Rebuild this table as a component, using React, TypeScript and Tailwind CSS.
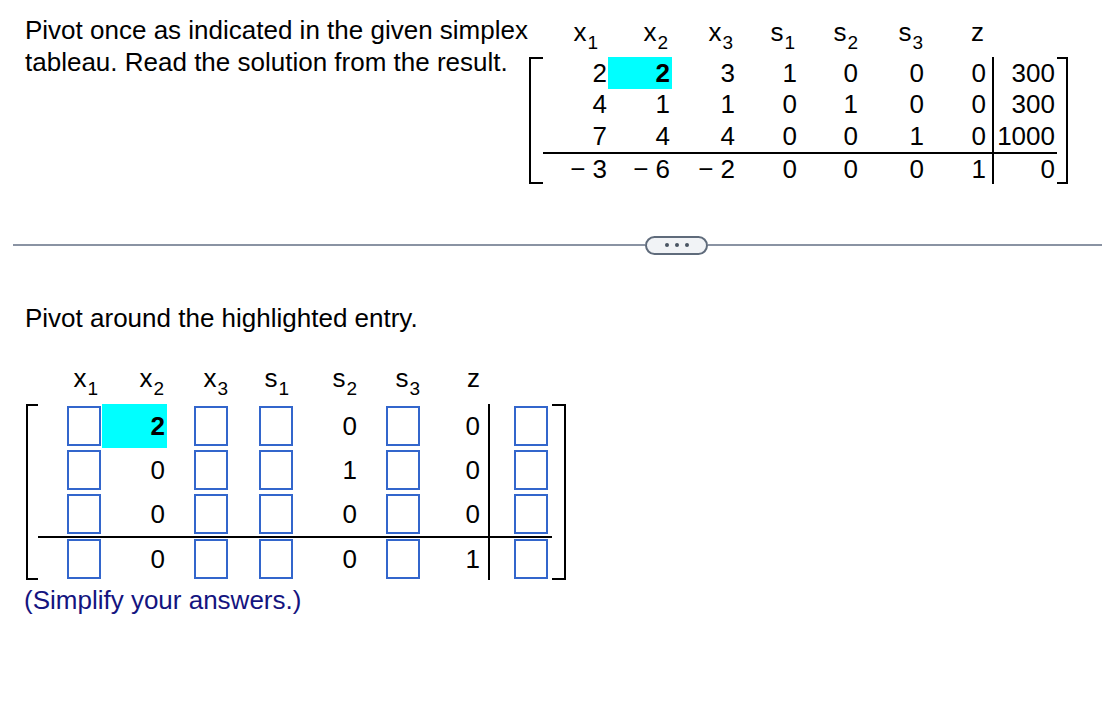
import React from 'react';

type Cell = { v?: string; box?: boolean; hi?: boolean };

const Lbl = ({ t, s }: { t: string; s?: string }) => (
  <span>
    {t}
    {s && <span className="relative top-[8px] ml-[1px] text-[19px]">{s}</span>}
  </span>
);

// top tableau columns (x1 .. z)
const topCols = [
  { w: 'w-[65px] pr-[1px]', hp: 'pr-[10px]', h: <Lbl t="x" s="1" /> },
  { w: 'w-[64px] pr-[2px]', hp: 'pr-[4px]', h: <Lbl t="x" s="2" /> },
  { w: 'w-[64px] pr-[1px]', hp: 'pr-[3px]', h: <Lbl t="x" s="3" /> },
  { w: 'w-[62px] pr-[1px]', hp: 'pr-[3px]', h: <Lbl t="s" s="1" /> },
  { w: 'w-[62px] pr-[2px]', hp: 'pr-[2px]', h: <Lbl t="s" s="2" /> },
  { w: 'w-[65px] pr-[1px]', hp: 'pr-[2px]', h: <Lbl t="s" s="3" /> },
  { w: 'w-[67px] pr-[6px]', hp: 'pr-[8px]', h: <Lbl t="z" /> },
];

const topRows: string[][] = [
  ['2', '2', '3', '1', '0', '0', '0', '300'],
  ['4', '1', '1', '0', '1', '0', '0', '300'],
  ['7', '4', '4', '0', '0', '1', '0', '1000'],
  ['− 3', '− 6', '− 2', '0', '0', '0', '1', '0'],
];

const botCols = [
  { w: 'w-[64px] pr-[1px]', hp: 'pr-[4px]', h: <Lbl t="x" s="1" /> },
  { w: 'w-[65px] pr-[2px]', hp: 'pr-[3px]', h: <Lbl t="x" s="2" /> },
  { w: 'w-[62px] pr-[1px]', hp: 'pr-[1px]', h: <Lbl t="x" s="3" /> },
  { w: 'w-[64px] pr-[0px]', hp: 'pr-[4px]', h: <Lbl t="s" s="1" /> },
  { w: 'w-[65px] pr-[1px]', hp: 'pr-[1px]', h: <Lbl t="s" s="2" /> },
  { w: 'w-[63px] pr-[1px]', hp: 'pr-[1px]', h: <Lbl t="s" s="3" /> },
  { w: 'w-[67px] pr-[8px]', hp: 'pr-[8px]', h: <Lbl t="z" /> },
];

const B: Cell = { box: true };
const botRows: Cell[][] = [
  [B, { v: '2', hi: true }, B, B, { v: '0' }, B, { v: '0' }, B],
  [B, { v: '0' }, B, B, { v: '1' }, B, { v: '0' }, B],
  [B, { v: '0' }, B, B, { v: '0' }, B, { v: '0' }, B],
  [B, { v: '0' }, B, B, { v: '0' }, B, { v: '1' }, B],
];

function TopTableau() {
  const rowH = ['h-[32px]', 'h-[31px]', 'h-[32px]', 'h-[32px]'];
  return (
    <div className="shrink-0 pt-[16px]">
      <div className="ml-[14px] flex h-[32px] leading-[32px]">
        {topCols.map((c, i) => (
          <div key={i} className={`${c.w.split(' ')[0]} ${c.hp} text-right`}>
            {c.h}
          </div>
        ))}
      </div>
      <div className="mt-[9px] flex">
        <div className="w-[14px] border-y-2 border-l-2 border-black" />
        <div className="flex flex-col">
          {topRows.map((r, ri) => (
            <div key={ri} className={`flex ${rowH[ri]} items-center ${ri === 3 ? 'border-t-2 border-black' : ''}`}>
              {r.slice(0, 7).map((v, ci) => (
                <div
                  key={ci}
                  className={`${topCols[ci].w} flex h-full items-center justify-end ${
                    ri === 0 && ci === 1 ? 'bg-[#00ffff] font-bold' : ''
                  }`}
                >
                  {v}
                </div>
              ))}
              <div className="flex h-full w-[65px] items-center justify-end border-l-2 border-black pr-[2px]">
                {r[7]}
              </div>
            </div>
          ))}
        </div>
        <div className="w-[11px] border-y-2 border-r-2 border-black" />
      </div>
    </div>
  );
}

function BottomTableau() {
  return (
    <div className="ml-[26px]">
      <div className="ml-[12px] flex h-[32px] leading-[32px]">
        {botCols.map((c, i) => (
          <div key={i} className={`${c.w.split(' ')[0]} ${c.hp} text-right`}>
            {c.h}
          </div>
        ))}
      </div>
      <div className="mt-[10px] flex">
        <div className="w-[12px] border-y-2 border-l-2 border-black" />
        <div className="flex flex-col">
          {botRows.map((r, ri) => (
            <div key={ri} className={`flex h-[44px] ${ri === 3 ? 'border-t-2 border-black' : ''}`}>
              {r.slice(0, 7).map((c, ci) => (
                <div
                  key={ci}
                  className={`${botCols[ci].w} flex h-full items-center justify-end ${
                    c.hi ? 'bg-[#00ffff] font-bold' : ''
                  }`}
                >
                  {c.box ? (
                    <div className="h-[40px] w-[34px] border-2 border-[#3366cc] bg-white" />
                  ) : (
                    c.v
                  )}
                </div>
              ))}
              <div className="flex h-full w-[64px] items-center justify-end border-l-2 border-black pr-[4px]">
                <div className="h-[40px] w-[34px] border-2 border-[#3366cc] bg-white" />
              </div>
            </div>
          ))}
        </div>
        <div className="w-[14px] border-y-2 border-r-2 border-black" />
      </div>
    </div>
  );
}

export default function App() {
  return (
    <div className="h-[716px] w-[1102px] overflow-hidden bg-white font-['Liberation_Sans',Arial,sans-serif] text-[26px] text-black">
      {/* problem statement + given tableau */}
      <div className="flex">
        <p className="w-[529px] shrink-0 whitespace-nowrap pl-[25px] pt-[14px] leading-[32px]">
          Pivot once as indicated in the given simplex
          <br />
          tableau. Read the solution from the result.
        </p>
        <TopTableau />
      </div>

      {/* divider */}
      <div className="mt-[51px] flex h-[20px] items-center">
        <div className="ml-[13px] h-[2px] w-[632px] bg-[#8a93a3]" />
        <div className="flex h-[19px] w-[63px] items-center justify-center gap-[6px] rounded-full border-2 border-[#5f6b7b] bg-[#f1f3f6]">
          <span className="h-[4px] w-[4px] rounded-full bg-[#4a5563]" />
          <span className="h-[4px] w-[4px] rounded-full bg-[#4a5563]" />
          <span className="h-[4px] w-[4px] rounded-full bg-[#4a5563]" />
        </div>
        <div className="h-[2px] flex-1 bg-[#8a93a3]" />
      </div>

      <p className="mt-[47px] pl-[25px] leading-[32px]">Pivot around the highlighted entry.</p>

      <div className="mt-[28px]">
        <BottomTableau />
      </div>

      <p className="mt-[4px] pl-[24px] leading-[32px] text-[#141480]">(Simplify your answers.)</p>
    </div>
  );
}
